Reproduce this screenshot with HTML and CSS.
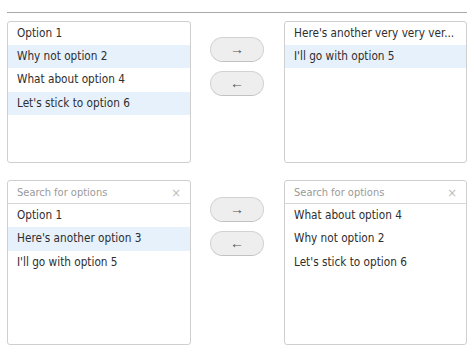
FILE: index.html
```html
<!DOCTYPE html>
<html>
<head>
<meta charset="utf-8">
<link rel="stylesheet" href="styles.css">
</head>
<body>
<div class="page">
  <div class="rule"></div>
  <div class="pair pair-top">
    <div class="list list-left">
      <div class="item">Option 1</div>
      <div class="item sel">Why not option 2</div>
      <div class="item">What about option 4</div>
      <div class="item sel">Let's stick to option 6</div>
    </div>
    <div class="controls">
      <button class="btn">→</button>
      <button class="btn">←</button>
    </div>
    <div class="list list-right">
      <div class="item">Here's another very very ver...</div>
      <div class="item sel">I'll go with option 5</div>
    </div>
  </div>
  <div class="pair pair-bottom">
    <div class="list list-left">
      <div class="search"><span class="ph">Search for options</span><span class="clear">×</span></div>
      <div class="item">Option 1</div>
      <div class="item sel">Here's another option 3</div>
      <div class="item">I'll go with option 5</div>
    </div>
    <div class="controls">
      <button class="btn">→</button>
      <button class="btn">←</button>
    </div>
    <div class="list list-right">
      <div class="search"><span class="ph">Search for options</span><span class="clear">×</span></div>
      <div class="item">What about option 4</div>
      <div class="item">Why not option 2</div>
      <div class="item">Let's stick to option 6</div>
    </div>
  </div>
</div>
</body>
</html>
```
FILE: styles.css
```css
html, body {
  margin: 0;
  padding: 0;
  background: #fff;
}
.page {
  padding: 12px 0 0 7px;
  font-family: "DejaVu Sans Condensed", "DejaVu Sans", "Liberation Sans", sans-serif;
  font-stretch: condensed;
  font-size: 11.7px;
  color: #2e2e2e;
}
.rule {
  width: 460px;
  height: 0;
  border-top: 1px solid #a9a9a9;
}
.pair {
  display: flex;
  align-items: flex-start;
}
.pair-top {
  margin-top: 8px;
}
.pair-bottom {
  margin-top: 17px;
}
.list {
  box-sizing: border-box;
  border: 1px solid #cfcfcf;
  border-radius: 3px;
  background: #fff;
  overflow: hidden;
}
.list-left {
  width: 184px;
}
.list-right {
  width: 183px;
}
.pair-top .list {
  height: 142px;
}
.pair-bottom .list {
  height: 165px;
}
.item {
  height: 23.3px;
  line-height: 23.3px;
  padding: 0 8px 0 9px;
  white-space: nowrap;
  overflow: hidden;
}
.pair-top .item:first-child {
  height: 23px;
  line-height: 23px;
}
.item.sel {
  background: #e7f1fc;
}
.search {
  display: flex;
  justify-content: space-between;
  align-items: center;
  height: 22px;
  padding: 0 9px;
  border-bottom: 1px solid #d6d6d6;
}
.ph {
  color: #9a9a9a;
  font-size: 11px;
}
.clear {
  color: #bdbdbd;
  font-size: 13px;
  font-family: "DejaVu Sans", sans-serif;
}
.controls {
  width: 54px;
  margin: 0 20px 0 19px;
  display: flex;
  flex-direction: column;
  gap: 9px;
}
.pair-top .controls {
  padding-top: 16px;
}
.pair-bottom .controls {
  padding-top: 17px;
}
.btn {
  box-sizing: border-box;
  width: 54px;
  height: 25px;
  padding: 0;
  border: 1px solid #d2d2d2;
  border-bottom-color: #c2c2c2;
  border-radius: 13px;
  background: #eeeeee;
  color: #555;
  font-family: "Liberation Sans", sans-serif;
  font-size: 14px;
  line-height: 23px;
}
```
